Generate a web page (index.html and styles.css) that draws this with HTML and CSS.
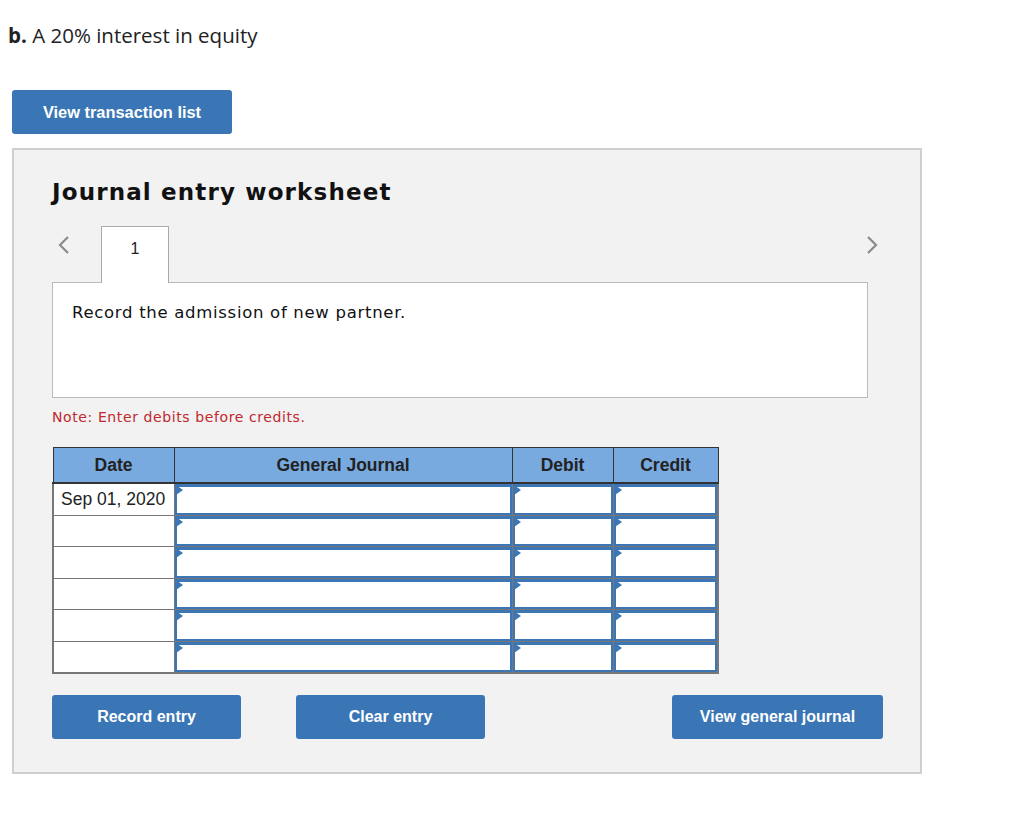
FILE: index.html
```html
<!DOCTYPE html>
<html lang="en">
<head>
    <meta charset="UTF-8">
    <title>Journal entry worksheet</title>
    <link rel="stylesheet" href="styles.css">
</head>
<body>
    <h3 class="part-title"><b>b.</b> A 20% interest in equity</h3>

    <div class="part-body">
        <button class="btn btn-list">View transaction list</button>

        <div class="worksheet">
            <h2>Journal entry worksheet</h2>

            <div class="tab-row">
                <span class="arrow arrow-left">
                    <svg width="12" height="20" viewBox="0 0 12 20"><polyline points="10,2 2,10 10,18" fill="none" stroke="#8a8a8a" stroke-width="2.2"/></svg>
                </span>
                <div class="tab">1</div>
                <span class="arrow arrow-right">
                    <svg width="12" height="20" viewBox="0 0 12 20"><polyline points="2,2 10,10 2,18" fill="none" stroke="#8a8a8a" stroke-width="2.2"/></svg>
                </span>
            </div>

            <div class="entry-box">Record the admission of new partner.</div>

            <p class="note">Note: Enter debits before credits.</p>

            <table class="journal">
                <thead>
                    <tr>
                        <th class="col-date">Date</th>
                        <th class="col-account">General Journal</th>
                        <th class="col-amt">Debit</th>
                        <th class="col-amt2">Credit</th>
                    </tr>
                </thead>
                <tbody>
                    <tr>
                        <td class="date">Sep 01, 2020</td>
                        <td><div class="field"></div></td>
                        <td><div class="field"></div></td>
                        <td><div class="field"></div></td>
                    </tr>
                    <tr>
                        <td class="date"></td>
                        <td><div class="field"></div></td>
                        <td><div class="field"></div></td>
                        <td><div class="field"></div></td>
                    </tr>
                    <tr>
                        <td class="date"></td>
                        <td><div class="field"></div></td>
                        <td><div class="field"></div></td>
                        <td><div class="field"></div></td>
                    </tr>
                    <tr>
                        <td class="date"></td>
                        <td><div class="field"></div></td>
                        <td><div class="field"></div></td>
                        <td><div class="field"></div></td>
                    </tr>
                    <tr>
                        <td class="date"></td>
                        <td><div class="field"></div></td>
                        <td><div class="field"></div></td>
                        <td><div class="field"></div></td>
                    </tr>
                    <tr>
                        <td class="date"></td>
                        <td><div class="field"></div></td>
                        <td><div class="field"></div></td>
                        <td><div class="field"></div></td>
                    </tr>
                </tbody>
            </table>

            <div class="actions">
                <button class="btn btn-action">Record entry</button>
                <button class="btn btn-action">Clear entry</button>
                <button class="btn btn-action btn-journal">View general journal</button>
            </div>
        </div>
    </div>
</body>
</html>
```

FILE: styles.css
```css
body {
    margin: 0;
    padding: 0;
    background-color: #fff;
    color: #222;
    font-family: "Open Sans", Arial, sans-serif;
}
.part-title {
    margin: 0;
    padding: 22px 0 0 8px;
    font-size: 20.5px;
    font-weight: normal;
    line-height: 26px;
    color: #222;
}
.part-body {
    padding-left: 12px;
}
.btn {
    background-color: #3a76b6;
    color: #fff;
    border: none;
    border-radius: 3px;
    font-family: "Liberation Sans", Arial, sans-serif;
    font-weight: bold;
    font-size: 16px;
    cursor: pointer;
}
.btn-list {
    margin-top: 42px;
    width: 220px;
    height: 44px;
    font-size: 16.4px;
}
.worksheet {
    margin-top: 14px;
    width: 910px;
    background-color: #f2f2f2;
    border: 2px solid #cfcfcf;
    padding: 24px 0 33px 38px;
    box-sizing: border-box;
}
.worksheet h2 {
    margin: 0;
    font-family: "DejaVu Sans", Verdana, sans-serif;
    font-size: 23px;
    font-weight: bold;
    letter-spacing: 1.15px;
    line-height: 36px;
    color: #111;
}
.tab-row {
    display: flex;
    align-items: flex-start;
    margin-top: 16px;
    width: 826px;
    height: 56px;
}
.arrow {
    display: flex;
    margin-top: 9px;
}
.arrow-left {
    margin-left: 6px;
}
.arrow-right {
    margin-left: auto;
}
.tab {
    margin-left: 31px;
    width: 68px;
    height: 57px;
    margin-bottom: -1px;
    box-sizing: border-box;
    background-color: #fff;
    border: 1px solid #aaa;
    border-bottom: none;
    text-align: center;
    font-family: "Liberation Sans", Arial, sans-serif;
    font-size: 16px;
    line-height: 44px;
    position: relative;
    z-index: 1;
}
.entry-box {
    width: 816px;
    height: 116px;
    box-sizing: border-box;
    background-color: #fff;
    border: 1px solid #bbb;
    padding: 19px 19px;
    font-family: "DejaVu Sans", Verdana, sans-serif;
    font-size: 16.5px;
    letter-spacing: 0.7px;
    line-height: 22px;
    color: #111;
}
.note {
    margin: 9px 0 0;
    font-family: "DejaVu Sans", Verdana, sans-serif;
    font-size: 14px;
    letter-spacing: 0.6px;
    line-height: 20px;
    color: #c1272d;
}
.journal {
    margin-top: 20px;
    border-collapse: collapse;
    font-family: "Liberation Sans", Arial, sans-serif;
    font-size: 17.5px;
}
.journal th {
    background-color: #78aadf;
    border: 1px solid #333;
    border-bottom-width: 2px;
    height: 34px;
    padding: 0;
    font-weight: bold;
    color: #222;
}
.col-date { width: 120px; }
.col-account { width: 337px; }
.col-amt { width: 100px; }
.col-amt2 { width: 104px; }
.journal td {
    border: 1px solid #777;
    padding: 0;
    height: 30.5px;
    background-color: #fff;
}
.journal td.date {
    border-left-width: 2px;
    padding-left: 7px;
}
.journal tr:last-child td {
    border-bottom-width: 2px;
}
.journal td:last-child {
    border-right-width: 2px;
}
.field {
    position: relative;
    height: 30.5px;
    box-sizing: border-box;
    border: 2px solid #3c76b5;
    border-top-width: 3px;
    background-color: #fff;
}
/* little marker in the corner of each input */
.field::before {
    content: "";
    position: absolute;
    left: -1px;
    top: -2px;
    border-left: 7px solid #3c76b5;
    border-top: 5px solid transparent;
    border-bottom: 5px solid transparent;
}
.actions {
    display: flex;
    margin-top: 21px;
    width: 831px;
}
.btn-action {
    width: 189px;
    height: 44px;
    margin-right: 55px;
}
.btn-journal {
    margin-left: auto;
    margin-right: 0;
    width: 211px;
}
```
